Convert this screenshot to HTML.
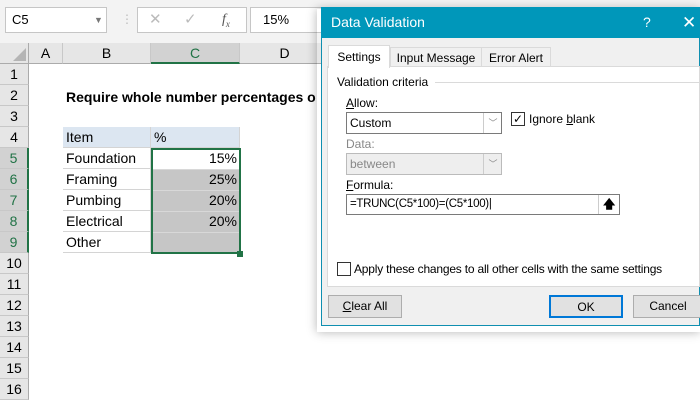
<!DOCTYPE html><html><head><style>
*{margin:0;padding:0;box-sizing:border-box}
body{width:700px;height:400px;overflow:hidden;background:#fff;font-family:"Liberation Sans",sans-serif;font-size:13px;position:relative;color:#000}
.a{position:absolute}
.rh{position:absolute;left:0;width:29px;height:21px;background:#e6e6e6;border-bottom:1px solid #c8c8c8;border-right:1px solid #ababab;text-align:center;line-height:21px;font-size:14px}
.ch{position:absolute;top:43px;height:21px;background:#e6e6e6;border-right:1px solid #c8c8c8;border-bottom:1px solid #ababab;text-align:center;line-height:20px;font-size:14px}
.c{position:absolute;height:21px;line-height:21px;font-size:14px;border-right:1px solid #d4d4d4;border-bottom:1px solid #d4d4d4;padding:0 3px}
.d{font-size:12px}
.btn{position:absolute;height:23px;background:#e1e1e1;border:1px solid #adadad;text-align:center;line-height:21px;font-size:12px}
</style></head><body>
<div class="a" style="left:0;top:0;width:700px;height:43px;background:#f3f3f3"></div>
<div class="a" style="left:5px;top:7px;width:102px;height:26px;background:#fff;border:1px solid #c6c6c6;font-size:13px;line-height:24px;padding-left:6px">C5<span class="a" style="left:88px;top:0;font-size:9px;color:#777">▼</span></div>
<div class="a" style="left:121px;top:12px;color:#bbb;font-size:12px">⋮</div>
<div class="a" style="left:137px;top:7px;width:110px;height:26px;background:#fff;border:1px solid #c6c6c6;color:#bbb;font-size:15px;line-height:24px"><span class="a" style="left:11px">✕</span><span class="a" style="left:46px">✓</span><span class="a" style="left:84px;color:#555;font-style:italic;font-family:'Liberation Serif';font-size:14px">f<sub style="font-size:9px">x</sub></span></div>
<div class="a" style="left:250px;top:7px;width:80px;height:26px;background:#fff;border:1px solid #c6c6c6;line-height:24px;padding-left:12px;font-size:13px">15%</div>
<div class="a" style="left:0;top:43px;width:29px;height:21px;background:#e6e6e6;border-right:1px solid #ababab;border-bottom:1px solid #ababab"></div>
<div class="a" style="left:13px;top:48px;width:0;height:0;border-left:13px solid transparent;border-bottom:13px solid #b5b5b5"></div>
<div class="ch" style="left:29px;width:34px">A</div>
<div class="ch" style="left:63px;width:88px">B</div>
<div class="ch" style="left:151px;width:89px;background:#d2d2d2;color:#217346;border-bottom:2px solid #217346">C</div>
<div class="ch" style="left:240px;width:90px">D</div>
<div class="rh" style="top:64px">1</div><div class="rh" style="top:85px">2</div><div class="rh" style="top:106px">3</div><div class="rh" style="top:127px">4</div>
<div class="rh" style="top:148px;background:#d2d2d2;color:#217346;border-right:2px solid #217346">5</div>
<div class="rh" style="top:169px;background:#d2d2d2;color:#217346;border-right:2px solid #217346">6</div>
<div class="rh" style="top:190px;background:#d2d2d2;color:#217346;border-right:2px solid #217346">7</div>
<div class="rh" style="top:211px;background:#d2d2d2;color:#217346;border-right:2px solid #217346">8</div>
<div class="rh" style="top:232px;background:#d2d2d2;color:#217346;border-right:2px solid #217346">9</div>
<div class="rh" style="top:253px">10</div><div class="rh" style="top:274px">11</div><div class="rh" style="top:295px">12</div><div class="rh" style="top:316px">13</div><div class="rh" style="top:337px">14</div><div class="rh" style="top:358px">15</div><div class="rh" style="top:379px">16</div>
<div class="a" style="left:66px;top:88px;font-weight:bold;font-size:14px;line-height:18px">Require whole number percentages o</div>
<div class="c" style="left:63px;top:127px;width:88px;background:#dce6f1">Item</div>
<div class="c" style="left:151px;top:127px;width:89px;background:#dce6f1">%</div>
<div class="c" style="left:63px;top:148px;width:88px">Foundation</div>
<div class="c" style="left:63px;top:169px;width:88px">Framing</div>
<div class="c" style="left:63px;top:190px;width:88px">Pumbing</div>
<div class="c" style="left:63px;top:211px;width:88px">Electrical</div>
<div class="c" style="left:63px;top:232px;width:88px">Other</div>
<div class="a" style="left:151px;top:148px;width:90px;height:106px;background:#c6c6c6;border:2px solid #217346"></div>
<div class="a" style="left:153px;top:150px;width:86px;height:19px;background:#fff"></div>
<div class="a" style="left:153px;top:169px;width:86px;height:1px;background:#d8d8d8"></div>
<div class="a" style="left:153px;top:190px;width:86px;height:1px;background:#d8d8d8"></div>
<div class="a" style="left:153px;top:211px;width:86px;height:1px;background:#d8d8d8"></div>
<div class="a" style="left:153px;top:232px;width:86px;height:1px;background:#d8d8d8"></div>
<div class="a" style="left:237px;top:251px;width:6px;height:6px;background:#217346"></div>
<div class="a" style="left:151px;top:148px;width:86px;text-align:right;font-size:14px;line-height:21px">15%<br>25%<br>20%<br>20%</div>
<!-- dialog -->
<div class="a" style="left:317px;top:9px;width:383px;height:323px;box-shadow:0 0 10px rgba(0,0,0,.3)"></div>
<div class="a" style="left:321px;top:7px;width:379px;height:319px;background:#f0f0f0;border:1px solid #0f8fb0"></div>
<div class="a" style="left:321px;top:7px;width:379px;height:31px;background:#0097ba;color:#fff;font-size:14px;line-height:31px;padding-left:10px">Data Validation<span class="a" style="left:322px;font-size:14px">?</span><span class="a" style="left:361px;font-size:17px">✕</span></div>
<div class="a" style="left:327px;top:66px;width:373px;height:221px;background:#fff;border:1px solid #dadada"></div>
<div class="a d" style="left:328px;top:45px;width:62px;height:23px;background:#fff;border:1px solid #dadada;border-bottom:none;line-height:22px;text-align:center">Settings</div>
<div class="a d" style="left:390px;top:47px;width:92px;height:20px;border:1px solid #dadada;line-height:20px;text-align:center">Input Message</div>
<div class="a d" style="left:481px;top:47px;width:70px;height:20px;border:1px solid #dadada;line-height:20px;text-align:center">Error Alert</div>
<div class="a d" style="left:337px;top:75px">Validation criteria</div>
<div class="a" style="left:435px;top:82px;width:265px;height:1px;background:#dadada"></div>
<div class="a d" style="left:346px;top:96px"><u>A</u>llow:</div>
<div class="a d" style="left:346px;top:112px;width:156px;height:22px;background:#fff;border:1px solid #7a7a7a;line-height:20px;padding-left:3px">Custom<span class="a" style="left:136px;top:0;width:19px;height:20px;border-left:1px solid #ccc;color:#888;text-align:center;font-size:9px">﹀</span></div>
<div class="a" style="left:511px;top:112px;width:14px;height:14px;border:1px solid #333;background:#fff;font-size:12px;line-height:12px;text-align:center">✓</div>
<div class="a d" style="left:529px;top:112px">Ignore <u>b</u>lank</div>
<div class="a d" style="left:346px;top:137px;color:#888">Data:</div>
<div class="a d" style="left:346px;top:153px;width:156px;height:22px;background:#eee;border:1px solid #bbb;line-height:20px;padding-left:3px;color:#888">between<span class="a" style="left:136px;top:0;width:19px;height:20px;border-left:1px solid #ccc;text-align:center;font-size:9px">﹀</span></div>
<div class="a d" style="left:346px;top:178px"><u>F</u>ormula:</div>
<div class="a" style="left:346px;top:194px;width:274px;height:21px;background:#fff;border:1px solid #7a7a7a;line-height:19px;padding-left:3px;font-size:11.5px;letter-spacing:-0.3px">=TRUNC(C5*100)=(C5*100)|<span class="a" style="left:251px;top:0;width:1px;height:19px;background:#ccc"></span><span class="a" style="left:256px;top:0;font-weight:bold;font-size:12px">🡅</span></div>
<div class="a" style="left:337px;top:262px;width:14px;height:14px;border:1px solid #333;background:#fff"></div>
<div class="a d" style="left:354px;top:262px;letter-spacing:-0.2px">Apply these changes to all other cells with the same settings</div>
<div class="btn" style="left:328px;top:295px;width:74px"><u>C</u>lear All</div>
<div class="btn" style="left:549px;top:295px;width:74px;border:2px solid #0078d7">OK</div>
<div class="btn" style="left:633px;top:295px;width:70px">Cancel</div>
</body></html>
